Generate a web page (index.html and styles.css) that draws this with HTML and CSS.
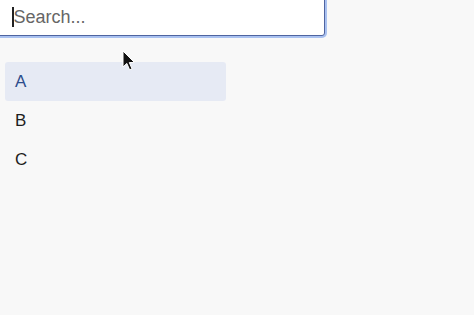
FILE: index.html
```html
<!DOCTYPE html>
<html>
<head>
<meta charset="utf-8">
<link rel="stylesheet" href="styles.css">
</head>
<body>
<div class="page">
  <div class="search-wrap">
    <div class="search"><span class="caret"></span><span class="placeholder">Search...</span></div>
  </div>
  <ul class="list">
    <li class="item active">A</li>
    <li class="item">B</li>
    <li class="item">C</li>
  </ul>
  <svg class="pointer" width="14" height="22" viewBox="0 0 14 22"><path d="M1 1 L1 17 L4.8 13.4 L7.6 19.8 L10 18.8 L7.3 12.6 L12.4 12.4 Z" fill="#111" stroke="#fff" stroke-width="1"/></svg>
</div>
</body>
</html>
```
FILE: styles.css
```css
html, body { margin: 0; padding: 0; }
body {
  background: #f8f8f8;
  font-family: "Liberation Sans", Arial, sans-serif;
  width: 474px;
  height: 315px;
  overflow: hidden;
}
.page { position: relative; height: 315px; display: flow-root; }
.search-wrap {
  margin-top: -8px;
  margin-left: -4px;
  width: 329px;
}
.search {
  height: 44px;
  box-sizing: border-box;
  background: #fff;
  border: 1px solid #4f64a0;
  border-radius: 3px;
  box-shadow: 0 0 0 2px #a9c1f0;
  display: flex;
  align-items: center;
  padding-left: 15px;
  padding-top: 6px;
}
.caret {
  width: 1.5px;
  height: 20px;
  background: #222;
}
.placeholder {
  font-size: 18px;
  color: #666;
}
.list {
  list-style: none;
  margin: 26px 0 0 5px;
  padding: 0;
  width: 221px;
}
.item {
  height: 39px;
  display: flex;
  align-items: center;
  padding-left: 10px;
  font-size: 17px;
  color: #1e1e1e;
  border-radius: 3px;
}
.item.active {
  background: #e6eaf4;
  color: #2d4d8c;
}
.pointer {
  position: absolute;
  left: 122px;
  top: 50px;
}
```
